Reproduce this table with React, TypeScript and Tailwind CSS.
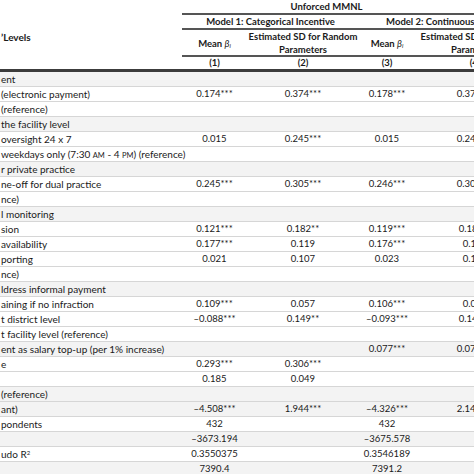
import React from "react";

type Row = { label: React.ReactNode; v: string[]; gray?: boolean };

const rows: Row[] = [
  { label: "ent", v: ["", "", "", ""], gray: true },
  { label: "(electronic payment)", v: ["0.174***", "0.374***", "0.178***", "0.374***"] },
  { label: "(reference)", v: ["", "", "", ""] },
  { label: "the facility level", v: ["", "", "", ""], gray: true },
  { label: "oversight 24 x 7", v: ["0.015", "0.245***", "0.015", "0.245***"] },
  {
    label: (
      <span>
        weekdays only (7:30 <span className="text-[7.5px]">AM</span> - 4{" "}
        <span className="text-[7.5px]">PM</span>) (reference)
      </span>
    ),
    v: ["", "", "", ""],
  },
  { label: "r private practice", v: ["", "", "", ""], gray: true },
  { label: "ne-off for dual practice", v: ["0.245***", "0.305***", "0.246***", "0.305***"] },
  { label: "nce)", v: ["", "", "", ""] },
  { label: "l monitoring", v: ["", "", "", ""], gray: true },
  { label: "sion", v: ["0.121***", "0.182**", "0.119***", "0.182**"] },
  { label: "availability", v: ["0.177***", "0.119", "0.176***", "0.119"] },
  { label: "porting", v: ["0.021", "0.107", "0.023", "0.107"] },
  { label: "nce)", v: ["", "", "", ""] },
  { label: "ldress informal payment", v: ["", "", "", ""], gray: true },
  { label: "aining if no infraction", v: ["0.109***", "0.057", "0.106***", "0.057"] },
  { label: "t district level", v: ["–0.088***", "0.149**", "–0.093***", "0.149**"] },
  { label: "t facility level (reference)", v: ["", "", "", ""] },
  { label: "ent as salary top-up (per 1% increase)", v: ["", "", "0.077***", "0.077***"], gray: true },
  { label: "e", v: ["0.293***", "0.306***", "", ""] },
  { label: "", v: ["0.185", "0.049", "", ""] },
  { label: "(reference)", v: ["", "", "", ""], gray: true },
  { label: "ant)", v: ["–4.508***", "1.944***", "–4.326***", "2.144***"], gray: true },
  { label: "pondents", v: ["432", "", "432", ""] },
  { label: "", v: ["–3673.194", "", "–3675.578", ""], gray: true },
  {
    label: (
      <span>
        udo R<sup className="text-[6px]">2</sup>
      </span>
    ),
    v: ["0.3550375", "", "0.3546189", ""],
  },
  { label: "", v: ["7390.4", "", "7391.2", ""], gray: true },
];

const cols = "grid grid-cols-[182px_65px_112px_56px_120px]";

function Beta() {
  return (
    <span>
      Mean <span className="italic font-normal">β</span>
      <sub className="italic font-normal text-[6px]">i</sub>
    </span>
  );
}

export default function App() {
  return (
    <div
      className="w-[474px] h-[474px] overflow-hidden bg-white text-[#1a1a1a]"
      style={{ fontFamily: "Lato, 'Open Sans', sans-serif" }}
    >
      <div className="w-[535px] text-[9.5px]">
        {/* header */}
        <div className="flex border-b-[3px] border-[#3c3c3c]">
          <div className="w-[182px] shrink-0 pt-[30px] font-bold pl-[1px] text-[10px]">’Levels</div>
          <div className="flex-1 flex flex-col font-bold">
            <div className="h-[15px] border-b-2 border-[#555] flex items-center justify-center pr-[64px] leading-none">
              Unforced MMNL
            </div>
            <div className="h-[15px] border-b-2 border-[#555] grid grid-cols-[177px_176px] leading-none">
              <div className="flex items-center justify-center">Model 1: Categorical Incentive</div>
              <div className="flex items-center justify-center pl-[8px]">Model 2: Continuous Incentive</div>
            </div>
            <div className="h-[27px] border-b-2 border-[#555] grid grid-cols-[65px_112px_56px_120px] leading-[13px]">
              <div className="flex items-center justify-center">
                <Beta />
              </div>
              <div className="flex items-center justify-center text-center">
                Estimated SD for Random
                <br />
                Parameters
              </div>
              <div className="flex items-center justify-center">
                <Beta />
              </div>
              <div className="flex items-center justify-center text-center">
                Estimated SD for Random
                <br />
                Parameters
              </div>
            </div>
            <div className="h-[12px] grid grid-cols-[65px_112px_56px_120px] leading-none">
              <div className="flex items-center justify-center">(1)</div>
              <div className="flex items-center justify-center">(2)</div>
              <div className="flex items-center justify-center">(3)</div>
              <div className="flex items-center justify-center">(4)</div>
            </div>
          </div>
        </div>
        {/* body */}
        {rows.map((r, i) => (
          <div
            key={i}
            className={`${cols} h-[15px] border-b border-[#d6d6d6] leading-none ${
              r.gray ? "bg-[#f3f3f3]" : "bg-white"
            }`}
          >
            <div className="flex items-center pl-[1px] whitespace-nowrap text-[10px]">{r.label}</div>
            {r.v.map((x, j) => (
              <div key={j} className="flex items-center justify-center whitespace-nowrap">
                {x}
              </div>
            ))}
          </div>
        ))}
      </div>
    </div>
  );
}
